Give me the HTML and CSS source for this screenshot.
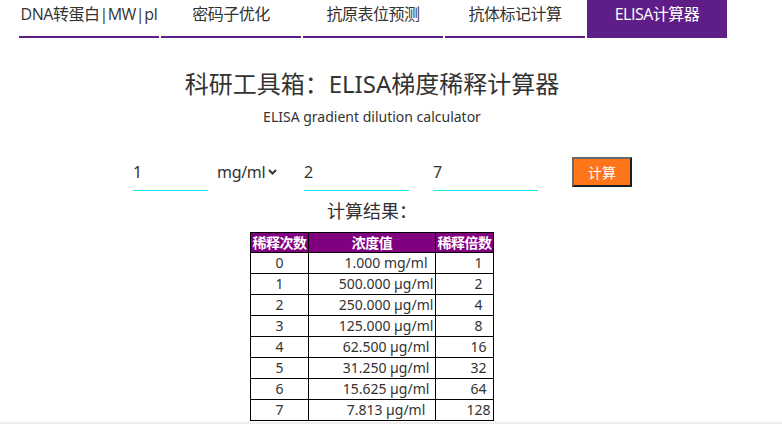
FILE: index.html
```html
<!DOCTYPE html>
<html lang="zh-CN">
<head>
<meta charset="utf-8">
<title>ELISA梯度稀释计算器</title>
<link rel="stylesheet" href="styles.css">
</head>
<body>
<nav class="tabs">
  <a class="tab">DNA转蛋白|MW|pI</a>
  <a class="tab">密码子优化</a>
  <a class="tab">抗原表位预测</a>
  <a class="tab">抗体标记计算</a>
  <a class="tab active">ELISA计算器</a>
</nav>
<main class="main">
  <h1 class="title">科研工具箱：ELISA梯度稀释计算器</h1>
  <p class="subtitle">ELISA gradient dilution calculator</p>
  <div class="form-row">
    <input class="field f1" type="text" value="1">
    <div class="unit">mg/ml
      <svg class="chev" width="9" height="6" viewBox="0 0 9 6"><path d="M1 1 L4.5 4.5 L8 1" fill="none" stroke="#333" stroke-width="2"/></svg>
    </div>
    <input class="field f2" type="text" value="2">
    <input class="field f3" type="text" value="7">
    <button class="calc">计算</button>
  </div>
  <div class="result-label">计算结果：</div>
  <table class="result">
    <thead>
      <tr><th class="c1">稀释次数</th><th class="c2">浓度值</th><th class="c3">稀释倍数</th></tr>
    </thead>
    <tbody>
      <tr><td class="c1">0</td><td class="c2">1.000 mg/ml</td><td class="c3">1</td></tr>
      <tr><td class="c1">1</td><td class="c2">500.000 µg/ml</td><td class="c3">2</td></tr>
      <tr><td class="c1">2</td><td class="c2">250.000 µg/ml</td><td class="c3">4</td></tr>
      <tr><td class="c1">3</td><td class="c2">125.000 µg/ml</td><td class="c3">8</td></tr>
      <tr><td class="c1">4</td><td class="c2">62.500 µg/ml</td><td class="c3">16</td></tr>
      <tr><td class="c1">5</td><td class="c2">31.250 µg/ml</td><td class="c3">32</td></tr>
      <tr><td class="c1">6</td><td class="c2">15.625 µg/ml</td><td class="c3">64</td></tr>
      <tr><td class="c1">7</td><td class="c2">7.813 µg/ml</td><td class="c3">128</td></tr>
    </tbody>
  </table>
</main>
<div class="rule"></div>
</body>
</html>
```
FILE: styles.css
```css
html, body {
  margin: 0;
  padding: 0;
  background: #fff;
}
body {
  font-family: "Noto Sans", "Noto Sans CJK SC", sans-serif;
  color: #333;
  overflow: hidden;
}
.tabs {
  display: flex;
  gap: 2px;
  padding-left: 19px;
}
.tab {
  box-sizing: border-box;
  width: 140px;
  height: 38px;
  padding-top: 4px;
  font-family: "Open Sans", "Noto Sans CJK SC", sans-serif;
  font-size: 16px;
  line-height: 20px;
  text-align: center;
  white-space: nowrap;
  border-bottom: 2px solid #5f1e87;
  color: #333;
  letter-spacing: -0.5px;
}
.tab.active {
  background: #5f1e87;
  color: #fff;
}
.main {
  width: 744px;
  text-align: center;
}
.title {
  margin: 30px 0 0;
  font-size: 24px;
  font-weight: normal;
  line-height: 32px;
  color: #333;
}
.subtitle {
  margin: 7px 0 0;
  font-size: 14px;
  line-height: 20px;
}
.form-row {
  display: flex;
  align-items: flex-start;
  margin-top: 30px;
  padding-left: 133px;
  text-align: left;
}
.field {
  box-sizing: border-box;
  height: 34px;
  padding: 0 0 4px;
  border: none;
  border-bottom: 1px solid #10e8f0;
  font-family: inherit;
  font-size: 16px;
  color: #333;
  outline: none;
  background: transparent;
}
.f1 { width: 75px; }
.f2 { width: 105px; margin-left: 28px; }
.f3 { width: 105px; margin-left: 24px; }
.unit {
  display: flex;
  align-items: center;
  gap: 3px;
  margin-left: 9px;
  width: 59px;
  height: 29px;
  font-size: 16px;
  white-space: nowrap;
  letter-spacing: -0.3px;
}
.chev { flex: none; margin-top: 1px; }
.calc {
  box-sizing: border-box;
  width: 60px;
  height: 30px;
  margin-left: 34px;
  padding: 0;
  border: 2px solid;
  border-color: #6a6a6a #1e1e1e #1e1e1e #6a6a6a;
  background: #ff7519;
  color: #fff;
  font-family: inherit;
  font-size: 14px;
}
.result-label {
  margin-top: 8px;
  font-size: 18px;
  line-height: 24px;
}
.result {
  margin: 9px auto 0;
  width: 240px;
  border-collapse: collapse;
  table-layout: fixed;
  font-size: 14px;
  border: 1px solid #000;
}
.result th, .result td {
  border: 1px solid #000;
  padding: 0;
  white-space: nowrap;
  overflow: hidden;
}
.result th {
  background: #800080;
  color: #fff;
  font-weight: bold;
  height: 19px;
  line-height: 19px;
  letter-spacing: -0.5px;
}
.result td {
  height: 20px;
  line-height: 20px;
  text-align: center;
}
.result th.c1 { width: 57px; }
.result th.c2 { width: 126px; }
.result th.c3 { width: 57px; }
.result td.c2, .result td.c3 {
  padding-left: 28px;
}
.rule {
  margin-top: 1px;
  border-top: 2px solid #eeeeee;
}
```
